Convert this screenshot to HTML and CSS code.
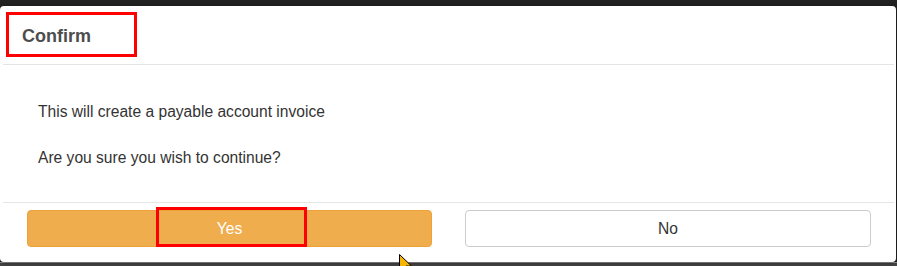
FILE: index.html
```html
<!DOCTYPE html>
<html>
<head>
<meta charset="utf-8">
<link rel="stylesheet" href="styles.css">
</head>
<body>
<div class="page">
  <div class="modal">
    <div class="modal-header">
      <h4 class="modal-title">Confirm</h4>
    </div>
    <div class="modal-body">
      <p>This will create a payable account invoice</p>
      <p>Are you sure you wish to continue?</p>
    </div>
    <div class="modal-footer">
      <button class="btn btn-warning">Yes</button>
      <button class="btn btn-default">No</button>
    </div>
    <div class="annot annot-title"></div>
    <div class="annot annot-yes"></div>
  </div>
  <div class="table-strip"></div>
  <svg class="cursor" width="14" height="22" viewBox="0 0 14 22">
    <path d="M0.5 0.5 L0.5 17 L4.5 13 L7.5 20 L10 19 L7 12 L12.5 12 Z" fill="#f7b500" stroke="#000" stroke-width="1"/>
  </svg>
</div>
</body>
</html>
```

FILE: styles.css
```css
html, body {
  margin: 0;
  padding: 0;
  background: #222222;
  overflow: hidden;
}
.page {
  position: relative;
  width: 897px;
  height: 266px;
  padding-top: 6px;
  box-sizing: border-box;
  font-family: "Liberation Sans", Arial, sans-serif;
}
.modal {
  position: relative;
  width: 896px;
  height: 256px;
  background: #ffffff;
  border-radius: 4px;
  box-shadow: 0 2px 6px rgba(0,0,0,0.4);
  display: flex;
  flex-direction: column;
}
.modal-header {
  height: 59px;
  box-sizing: border-box;
  border-bottom: 1px solid #e5e5e5;
  margin: 0 2px 0 3px;
  padding: 1px 0 0 19px;
  display: flex;
  align-items: center;
}
.modal-title {
  margin: 0;
  font-size: 18px;
  font-weight: bold;
  color: #4d4d4d;
  line-height: 20px;
}
.modal-body {
  height: 138px;
  box-sizing: border-box;
  border-bottom: 1px solid #e5e5e5;
  margin: 0 2px 0 3px;
  padding: 37px 38px 0 35px;
}
.modal-body p {
  margin: 0 0 26px 0;
  font-size: 15.6px;
  line-height: 20px;
  color: #333333;
}
.modal-footer {
  display: grid;
  grid-template-columns: 405px 406px;
  column-gap: 33px;
  padding: 7px 0 0 27px;
}
.btn {
  height: 37px;
  box-sizing: border-box;
  border-radius: 4px;
  font-family: "Liberation Sans", Arial, sans-serif;
  font-size: 15.6px;
  padding: 0;
  margin: 0;
}
.btn-warning {
  background: #f0ad4e;
  border: 1px solid #eea236;
  color: #ffffff;
}
.btn-default {
  background: #ffffff;
  border: 1px solid #cccccc;
  color: #333333;
}
.annot {
  position: absolute;
  border: 3px solid #ff0000;
  box-sizing: border-box;
}
.annot-title {
  left: 6px;
  top: 6px;
  width: 131px;
  height: 45px;
}
.annot-yes {
  left: 156px;
  top: 201px;
  width: 151px;
  height: 40px;
}
.table-strip {
  height: 4px;
  background: #4a4a4a;
  border-top: 1px solid #9a9a9a;
  box-sizing: border-box;
}
.cursor {
  position: absolute;
  left: 399px;
  top: 254px;
}
```
